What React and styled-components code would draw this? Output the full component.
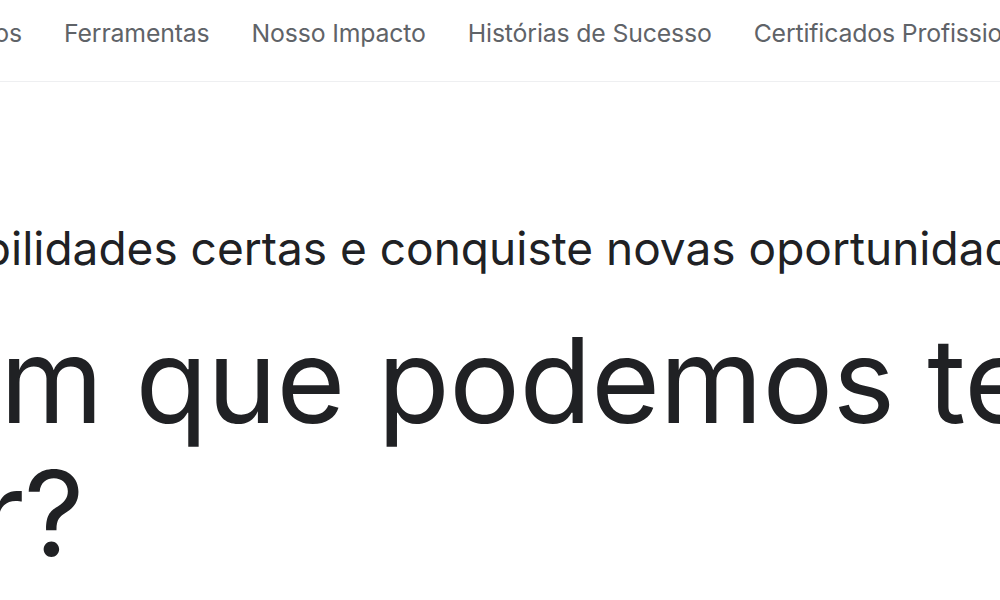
import React from "react";
import styled, { createGlobalStyle } from "styled-components";

const Global = createGlobalStyle`
  html, body { margin: 0; padding: 0; background: #ffffff; }
  body { font-family: "Inter", "Open Sans", "Liberation Sans", sans-serif; -webkit-font-smoothing: antialiased; }
`;

const Page = styled.div`
  width: 1000px;
  height: 600px;
  overflow: hidden;
  background: #ffffff;
`;

const Nav = styled.nav`
  height: 82px;
  box-sizing: border-box;
  border-bottom: 1px solid #eeeff1;
  display: flex;
  align-items: flex-start;
  padding-top: 21px;
  padding-left: 22px;
  gap: 42px;
  white-space: nowrap;
`;

const NavItem = styled.a`
  font-size: 24.8px;
  line-height: 25px;
  color: #5f6368;
  text-decoration: none;
  letter-spacing: -0.15px;
`;

/* zero-width anchor: its text runs off to the left of the point where it sits */
const Lead = styled.span`
  display: flex;
  justify-content: flex-end;
  width: 0;
  white-space: nowrap;
  flex: none;
`;

const Hero = styled.section`
  padding-top: 136px;
  display: flex;
  flex-direction: column;
`;

const Line = styled.div`
  display: flex;
  white-space: nowrap;
  padding-left: ${(p) => p.$offset || 0}px;
`;

const Subtitle = styled(Line)`
  font-size: 46px;
  line-height: 60px;
  color: #202124;
`;

const Heading = styled.h1`
  margin: 36px 0 0;
  font-weight: 400;
  font-size: 118px;
  line-height: 133px;
  color: #202124;
  letter-spacing: -0.5px;
`;

export default function App() {
  return (
    <>
      <Global />
      <Page>
        <Nav>
          <NavItem as="span">
            <Lead>Recursos</Lead>
          </NavItem>
          <NavItem href="#">Ferramentas</NavItem>
          <NavItem href="#">Nosso Impacto</NavItem>
          <NavItem href="#">Histórias de Sucesso</NavItem>
          <NavItem href="#">Certificados Profissionais do Google</NavItem>
        </Nav>
        <Hero>
          <Subtitle $offset={11}>
            <Lead>Aprenda as hab</Lead>
            ilidades certas e conquiste novas oportunidades
          </Subtitle>
          <Heading>
            <Line $offset={0}>
              <Lead>E</Lead>m que podemos te ajudar
            </Line>
            <Line $offset={24}>
              <Lead>a crescer ajudar</Lead>?
            </Line>
          </Heading>
        </Hero>
      </Page>
    </>
  );
}
